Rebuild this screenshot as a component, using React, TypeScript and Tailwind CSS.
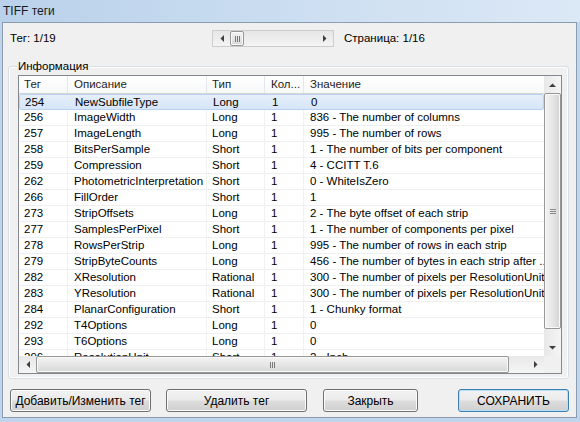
const rows: [string, string, string, string, string][] = [
  ["254", "NewSubfileType", "Long", "1", "0"],
  ["256", "ImageWidth", "Long", "1", "836 - The number of columns"],
  ["257", "ImageLength", "Long", "1", "995 - The number of rows"],
  ["258", "BitsPerSample", "Short", "1", "1 - The number of bits per component"],
  ["259", "Compression", "Short", "1", "4 - CCITT T.6"],
  ["262", "PhotometricInterpretation", "Short", "1", "0 - WhiteIsZero"],
  ["266", "FillOrder", "Short", "1", "1"],
  ["273", "StripOffsets", "Long", "1", "2 - The byte offset of each strip"],
  ["277", "SamplesPerPixel", "Short", "1", "1 - The number of components per pixel"],
  ["278", "RowsPerStrip", "Long", "1", "995 - The number of rows in each strip"],
  ["279", "StripByteCounts", "Long", "1", "456 - The number of bytes in each strip after ..."],
  ["282", "XResolution", "Rational", "1", "300 - The number of pixels per ResolutionUnit in the ImageWidth"],
  ["283", "YResolution", "Rational", "1", "300 - The number of pixels per ResolutionUnit in the ImageLength"],
  ["284", "PlanarConfiguration", "Short", "1", "1 - Chunky format"],
  ["292", "T4Options", "Long", "1", "0"],
  ["293", "T6Options", "Long", "1", "0"],
  ["296", "ResolutionUnit", "Short", "1", "2 - Inch"],
];

function Tri({ dir }: { dir: "l" | "r" | "u" | "d" }) {
  const pts = {
    l: "4,0 4,7 0.5,3.5",
    r: "0,0 0,7 3.5,3.5",
    u: "0,4 7,4 3.5,0.5",
    d: "0,0 7,0 3.5,3.5",
  }[dir];
  const horiz = dir === "l" || dir === "r";
  return (
    <svg width={horiz ? 4 : 7} height={horiz ? 7 : 4} viewBox={horiz ? "0 0 4 7" : "0 0 7 4"}>
      <polygon points={pts} fill="#3f3f3f" />
    </svg>
  );
}

function Grip({ vertical }: { vertical?: boolean }) {
  return (
    <div className={`flex ${vertical ? "flex-col gap-[1px]" : "gap-[1px]"}`}>
      {[0, 1, 2].map((i) => (
        <span
          key={i}
          className={vertical ? "h-[1px] w-[6px] bg-[#8a8a8a]" : "h-[6px] w-[1px] bg-[#7a7a7a]"}
        />
      ))}
    </div>
  );
}

const hThumb =
  "rounded-[2px] border border-[#979797] bg-[linear-gradient(to_bottom,#f3f3f3,#e6e6e6_50%,#d6d6d6)] shadow-[inset_0_0_0_1px_#fafafa] flex items-center justify-center";

function Button({ label, w, primary }: { label: string; w: string; primary?: boolean }) {
  return (
    <button
      type="button"
      className={`${w} h-[23px] rounded-[3px] border ${
        primary
          ? "border-[#3c7fb1] shadow-[inset_0_0_0_1px_#b7e0f6]"
          : "border-[#707070] shadow-[inset_0_0_0_1px_#fbfbfb]"
      } bg-[linear-gradient(to_bottom,#f2f2f2,#ebebeb_48%,#dddddd_52%,#cfcfcf)] text-[12px] text-black`}
    >
      {label}
    </button>
  );
}

export default function App() {
  const cols = ["w-[49px] pl-[5px]", "w-[139px] pl-[6px]", "w-[58px] pl-[5px]", "w-[39px] pl-[6px]"];
  return (
    <div className="flex h-[422px] w-[580px] flex-col overflow-hidden bg-[#c0d5ec] font-['Liberation_Sans',Arial,sans-serif] text-[11.5px] text-black">
      <div className="flex h-[22px] shrink-0 items-center bg-[linear-gradient(to_right,#b9d1ea,#cfe0f2_60%,#dbe8f6)] pl-[3px] text-[12px] text-[#1a1a1a]">
        TIFF теги
      </div>

      <div className="ml-[2px] flex h-[396px] w-[575px] shrink-0 flex-col border border-[#8b9bb0] bg-[#f0f0f0]">
        {/* top row */}
        <div className="mt-[7px] flex h-[17px] items-center pl-[7px]">
          <span className="w-[202px]">Тег: 1/19</span>
          <div className="flex h-[17px] w-[122px] items-center border border-[#cdcdcd] bg-[linear-gradient(to_bottom,#e6e6e6,#f4f4f4)]">
            <div className="flex w-[17px] justify-center">
              <Tri dir="l" />
            </div>
            <div className={`${hThumb} h-[15px] w-[14px]`}>
              <Grip />
            </div>
            <div className="flex-1" />
            <div className="flex w-[17px] justify-center">
              <Tri dir="r" />
            </div>
          </div>
          <span className="ml-[10px]">Страница: 1/16</span>
        </div>

        {/* group box */}
        <div className="relative ml-[5px] mt-[19px] h-[313px] w-[561px] rounded-[3px] border border-[#d5dfe5] pl-[9px] pt-[8px] shadow-[inset_0_0_0_1px_#ffffff]">
          <span className="absolute left-[8px] top-[-8px] bg-[#f0f0f0] px-[1px] leading-[14px]">Информация</span>

          <div className="flex h-[299px] w-[544px] flex-col border border-[#828790] bg-white">
            <div className="flex h-[280px]">
              <div className="flex-1 overflow-hidden">
                {/* header */}
                <div className="flex h-[18px] items-center border-b border-[#d5d5d5] bg-[linear-gradient(to_bottom,#ffffff,#f7f8fa)] text-[#1e1e1e]">
                  {["Тег", "Описание", "Тип", "Кол..."].map((h, i) => (
                    <div key={h} className={`${cols[i]} h-full border-r border-[#e3e7ec] leading-[17px]`}>
                      {h}
                    </div>
                  ))}
                  <div className="flex-1 pl-[6px] leading-[17px]">Значение</div>
                </div>
                {/* rows */}
                {rows.map((r, idx) => (
                  <div
                    key={r[0]}
                    className={`flex h-[16px] items-center whitespace-nowrap ${
                      idx === 0
                        ? "rounded-[2px] border border-[#b8d3f1] bg-[linear-gradient(to_bottom,#e6effa,#d6e5f7)]"
                        : "border-b border-[#efefef]"
                    }`}
                  >
                    {cols.map((c, i) => (
                      <div key={i} className={`${c} h-full overflow-hidden leading-[15px] ${idx === 0 ? "" : "border-r border-[#f1f1f1]"}`}>
                        {r[i]}
                      </div>
                    ))}
                    <div className="h-full flex-1 overflow-hidden pl-[6px] leading-[15px]">{r[4]}</div>
                  </div>
                ))}
              </div>

              {/* vertical scrollbar */}
              <div className="flex w-[17px] flex-col bg-[linear-gradient(to_right,#e8e8e8,#f5f5f5)]">
                <div className="flex h-[17px] items-center justify-center">
                  <Tri dir="u" />
                </div>
                <div className="flex h-[236px] items-center justify-center rounded-[2px] border border-[#979797] bg-[linear-gradient(to_right,#f3f3f3,#e6e6e6_50%,#d3d3d3)] shadow-[inset_0_0_0_1px_#fafafa]">
                  <Grip vertical />
                </div>
                <div className="flex-1" />
                <div className="flex h-[17px] items-center justify-center">
                  <Tri dir="d" />
                </div>
              </div>
            </div>

            {/* horizontal scrollbar */}
            <div className="flex h-[17px]">
              <div className="flex flex-1 items-center bg-[linear-gradient(to_bottom,#e8e8e8,#f5f5f5)]">
                <div className="flex w-[17px] justify-center">
                  <Tri dir="l" />
                </div>
                <div className={`${hThumb} h-[17px] w-[473px]`}>
                  <Grip />
                </div>
                <div className="flex-1" />
                <div className="flex w-[17px] justify-center">
                  <Tri dir="r" />
                </div>
              </div>
              <div className="w-[17px] bg-[#f0f0f0]" />
            </div>
          </div>
        </div>

        {/* buttons */}
        <div className="mt-[10px] flex pl-[7px]">
          <Button label="Добавить/Изменить тег" w="w-[141px]" />
          <div className="w-[15px]" />
          <Button label="Удалить тег" w="w-[141px]" />
          <div className="w-[16px]" />
          <Button label="Закрыть" w="w-[95px]" />
          <div className="w-[40px]" />
          <Button label="СОХРАНИТЬ" w="w-[111px]" primary />
        </div>
      </div>
    </div>
  );
}
